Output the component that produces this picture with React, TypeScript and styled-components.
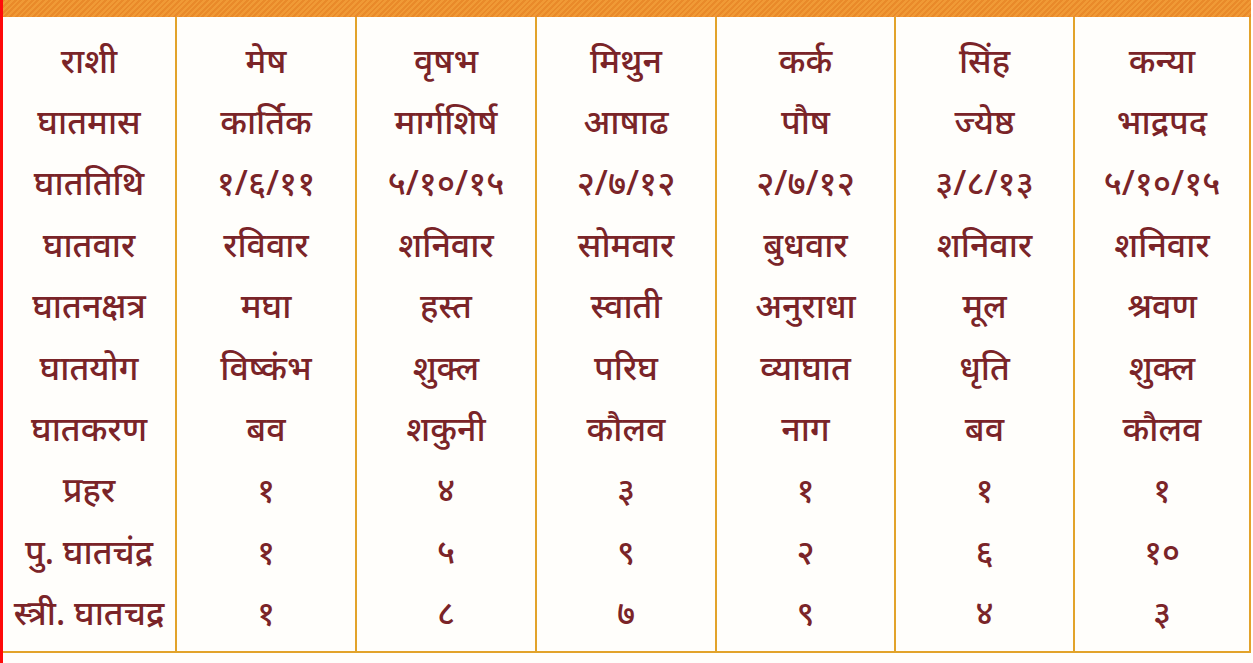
import React from "react";
import styled, { createGlobalStyle } from "styled-components";

const Global = createGlobalStyle`
  html, body { margin: 0; padding: 0; background: #ffffff; }
  body { width: 1253px; height: 663px; overflow: hidden; }
`;

const Page = styled.div`
  display: flex;
  width: 1253px;
  height: 663px;
  background: #fffefb;
`;

const RedEdge = styled.div`
  width: 3px;
  background: #ff0a0a;
  flex: none;
`;

const Main = styled.div`
  display: flex;
  flex-direction: column;
  width: 1248px;
`;

const Band = styled.div`
  height: 17px;
  background: repeating-linear-gradient(
    135deg,
    #e98a2a 0px,
    #e98a2a 2px,
    #f09a36 2px,
    #f09a36 4px
  );
`;

const Table = styled.div`
  display: grid;
  grid-template-columns: 174px 180px 180px 180px 179px 179px 176px;
  height: 636px;
  border-bottom: 2px solid #e2a32a;
  box-sizing: border-box;
`;

const Column = styled.div`
  display: flex;
  flex-direction: column;
  padding-top: 12px;
  border-right: 2px solid #e2a32a;
  box-sizing: border-box;
`;

const Cell = styled.div`
  height: 61.4px;
  display: flex;
  align-items: center;
  justify-content: center;
  font-family: "Noto Sans", "Noto Sans Devanagari", sans-serif;
  font-size: 34px;
  font-weight: 500;
  color: #7a2428;
  white-space: nowrap;
`;

const columns: string[][] = [
  ["राशी", "घातमास", "घाततिथि", "घातवार", "घातनक्षत्र", "घातयोग", "घातकरण", "प्रहर", "पु. घातचंद्र", "स्त्री. घातचद्र"],
  ["मेष", "कार्तिक", "१/६/११", "रविवार", "मघा", "विष्कंभ", "बव", "१", "१", "१"],
  ["वृषभ", "मार्गशिर्ष", "५/१०/१५", "शनिवार", "हस्त", "शुक्ल", "शकुनी", "४", "५", "८"],
  ["मिथुन", "आषाढ", "२/७/१२", "सोमवार", "स्वाती", "परिघ", "कौलव", "३", "९", "७"],
  ["कर्क", "पौष", "२/७/१२", "बुधवार", "अनुराधा", "व्याघात", "नाग", "१", "२", "९"],
  ["सिंह", "ज्येष्ठ", "३/८/१३", "शनिवार", "मूल", "धृति", "बव", "१", "६", "४"],
  ["कन्या", "भाद्रपद", "५/१०/१५", "शनिवार", "श्रवण", "शुक्ल", "कौलव", "१", "१०", "३"],
];

export default function App() {
  return (
    <>
      <Global />
      <Page>
        <RedEdge />
        <Main>
          <Band />
          <Table>
            {columns.map((col, i) => (
              <Column key={i}>
                {col.map((t, j) => (
                  <Cell key={j}>{t}</Cell>
                ))}
              </Column>
            ))}
          </Table>
        </Main>
      </Page>
    </>
  );
}
